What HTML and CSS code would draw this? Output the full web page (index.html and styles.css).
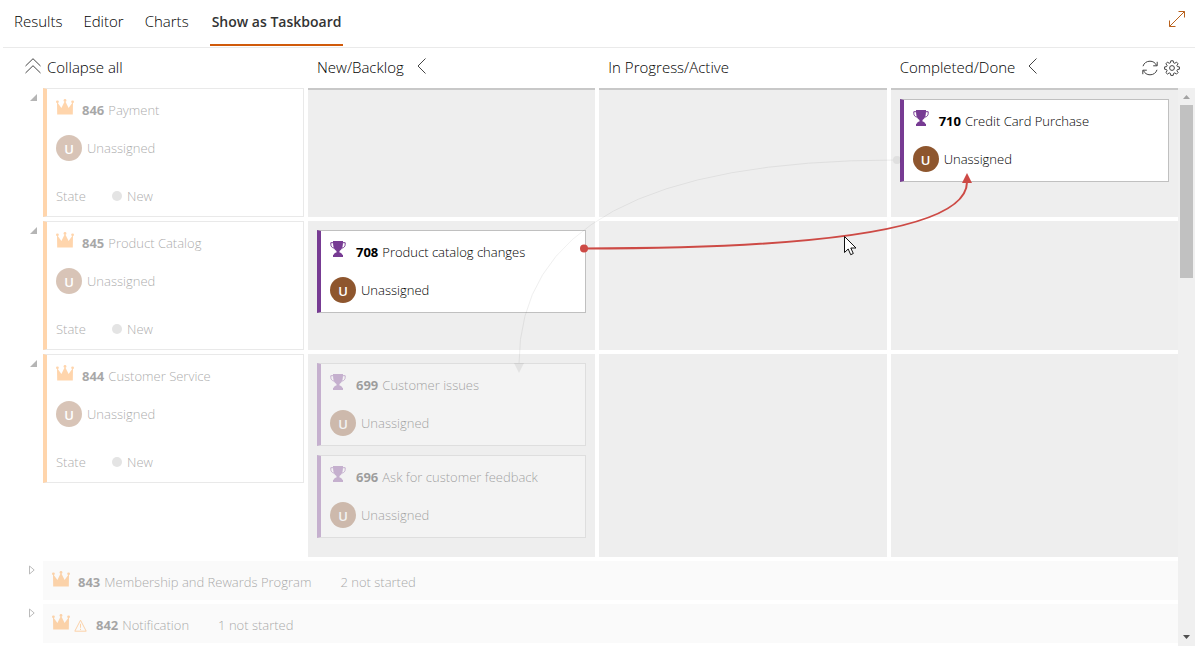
FILE: index.html
```html
<!DOCTYPE html>
<html lang="en">
<head>
    <meta charset="UTF-8">
    <meta name="viewport" content="width=device-width, initial-scale=1.0"/>
    <title>Show as Taskboard</title>
    <link rel="stylesheet" href="styles.css">
</head>
<body>
    <!--shared icons-->
    <svg class="icon-defs" aria-hidden="true">
      <symbol id="crown" viewBox="0 0 18 16">
        <path d="M1.200 15.500L1 4h.8l3.600 5L8.600 2.500h.8l3.200 6.500L16.200 4h.8l-.2 11.500z"/>
        <circle cx="1.400" cy="2.800" r="1.400"/><circle cx="9" cy="1.500" r="1.400"/><circle cx="16.600" cy="2.800" r="1.400"/>
      </symbol>
      <symbol id="trophy" viewBox="0 0 16 16">
        <path d="M3 0h10c0 5-.6 8.300-3.500 10v1.500c1.600.3 2.500 1 2.700 2.200h.8V16H3v-2.300h.8c.2-1.200 1.100-1.900 2.700-2.200V10C3.600 8.300 3 5 3 0z"/>
        <path class="handles" d="M3.500 1.700H.8v1.500c0 2.200 1.100 3.500 3.200 3.900M12.500 1.700h2.700v1.500c0 2.200-1.100 3.500-3.200 3.900"/>
      </symbol>
    </svg>

    <!--tabs-->
    <header class="topbar">
      <nav class="tabs">
        <a href="#results" class="tab">Results</a>
        <a href="#editor" class="tab">Editor</a>
        <a href="#charts" class="tab">Charts</a>
        <a href="#taskboard" class="tab active" aria-current="page">Show as Taskboard</a>
      </nav>
      <button type="button" class="icon-btn expand" aria-label="Full screen">
        <svg width="18" height="18" viewBox="0 0 18 18"><path d="M1.500 16.500l15-15M10.500 1.500h6v6M1.500 10.500v6h6"/></svg>
      </button>
    </header>

    <!--column headers-->
    <div class="columns">
      <button type="button" class="collapse-all">
        <svg width="16" height="16" viewBox="0 0 16 16"><path d="M.5 8L8 .7 15.500 8M.5 15L8 7.700l7.500 7.300"/></svg>
        Collapse all
      </button>
      <div class="column-head">New/Backlog
        <button type="button" class="icon-btn" aria-label="Collapse New/Backlog">
          <svg width="10" height="16" viewBox="0 0 10 16"><path d="M8.500.5L1 8l7.500 7.500"/></svg>
        </button>
      </div>
      <div class="column-head">In Progress/Active</div>
      <div class="column-head">Completed/Done
        <button type="button" class="icon-btn" aria-label="Collapse Completed/Done">
          <svg width="10" height="16" viewBox="0 0 10 16"><path d="M8.500.5L1 8l7.500 7.500"/></svg>
        </button>
      </div>
      <div class="tools">
        <button type="button" class="icon-btn" aria-label="Refresh">
          <svg width="16" height="16" viewBox="0 0 16 16"><path d="M1 6.200C2 3 4.600 1.200 8 1.200c3 0 5.300 1.500 6.600 4.300M15 9.800c-1 3.200-3.600 5-7 5-3 0-5.300-1.500-6.600-4.300M15.200 1.800v4h-4M.8 14.200v-4h4"/></svg>
        </button>
        <button type="button" class="icon-btn" aria-label="Settings">
          <svg width="16" height="16" viewBox="0 0 16 16"><path d="M6.800.8h2.400l.4 2 1.200.5 1.700-1.200 1.600 1.700-1.200 1.600.5 1.200 2 .3v2.300l-2 .4-.5 1.200 1.200 1.700-1.600 1.600-1.700-1.200-1.200.5-.4 2H6.800l-.4-2-1.200-.5-1.700 1.200-1.600-1.600 1.200-1.700-.5-1.200-2-.4V6.900l2-.3.5-1.200-1.200-1.600 1.600-1.700 1.700 1.200 1.200-.5z"/><circle cx="8" cy="8" r="2.400"/></svg>
        </button>
      </div>
    </div>

    <!--board-->
    <main class="board">
      <div class="lanes">
        <section class="lane first">
          <button type="button" class="toggle" aria-label="Collapse 846"><svg width="7" height="7" viewBox="0 0 7 7"><path d="M7 0v7H0z"/></svg></button>
          <article class="card epic faded">
            <h3 class="title"><svg class="icon"><use href="#crown"/></svg><b>846</b> Payment</h3>
            <p class="owner"><span class="avatar">U</span>Unassigned</p>
            <p class="state"><span class="state-label">State</span><i class="dot"></i>New</p>
          </article>
          <div class="cell"></div>
          <div class="cell"></div>
          <div class="cell">
            <article class="card">
              <h3 class="title"><svg class="icon"><use href="#trophy"/></svg><b>710</b> Credit Card Purchase</h3>
              <p class="owner"><span class="avatar">U</span>Unassigned</p>
            </article>
          </div>
        </section>

        <section class="lane">
          <button type="button" class="toggle" aria-label="Collapse 845"><svg width="7" height="7" viewBox="0 0 7 7"><path d="M7 0v7H0z"/></svg></button>
          <article class="card epic faded">
            <h3 class="title"><svg class="icon"><use href="#crown"/></svg><b>845</b> Product Catalog</h3>
            <p class="owner"><span class="avatar">U</span>Unassigned</p>
            <p class="state"><span class="state-label">State</span><i class="dot"></i>New</p>
          </article>
          <div class="cell">
            <article class="card">
              <h3 class="title"><svg class="icon"><use href="#trophy"/></svg><b>708</b> Product catalog changes</h3>
              <p class="owner"><span class="avatar">U</span>Unassigned</p>
            </article>
          </div>
          <div class="cell"></div>
          <div class="cell"></div>
        </section>

        <section class="lane">
          <button type="button" class="toggle" aria-label="Collapse 844"><svg width="7" height="7" viewBox="0 0 7 7"><path d="M7 0v7H0z"/></svg></button>
          <article class="card epic faded">
            <h3 class="title"><svg class="icon"><use href="#crown"/></svg><b>844</b> Customer Service</h3>
            <p class="owner"><span class="avatar">U</span>Unassigned</p>
            <p class="state"><span class="state-label">State</span><i class="dot"></i>New</p>
          </article>
          <div class="cell">
            <article class="card faded">
              <h3 class="title"><svg class="icon"><use href="#trophy"/></svg><b>699</b> Customer issues</h3>
              <p class="owner"><span class="avatar">U</span>Unassigned</p>
            </article>
            <article class="card faded">
              <h3 class="title"><svg class="icon"><use href="#trophy"/></svg><b>696</b> Ask for customer feedback</h3>
              <p class="owner"><span class="avatar">U</span>Unassigned</p>
            </article>
          </div>
          <div class="cell"></div>
          <div class="cell"></div>
        </section>

        <section class="lane closed">
          <button type="button" class="toggle" aria-label="Expand 843"><svg width="6" height="10" viewBox="0 0 6 10"><path class="hollow" d="M.5 1l4.700 4L.5 9z"/></svg></button>
          <div class="summary">
            <h3 class="title faded"><svg class="icon"><use href="#crown"/></svg><b>843</b> Membership and Rewards Program</h3>
            <span class="faded">2 not started</span>
          </div>
        </section>

        <section class="lane closed">
          <button type="button" class="toggle" aria-label="Expand 842"><svg width="6" height="10" viewBox="0 0 6 10"><path class="hollow" d="M.5 1l4.700 4L.5 9z"/></svg></button>
          <div class="summary">
            <h3 class="title faded"><svg class="icon"><use href="#crown"/></svg><svg class="warning" viewBox="0 0 13 13"><path d="M6.500 1.200l5.700 11H.8zM6.500 4.800v4M6.500 9.800v1.200"/></svg><b>842</b> Notification</h3>
            <span class="faded">1 not started</span>
          </div>
        </section>
      </div>

      <div class="scrollbar" aria-hidden="true">
        <svg width="17" height="17" viewBox="0 0 17 17"><path fill="#a3a3a3" d="M5 11l3.500-4 3.500 4z"/></svg>
        <div class="track"><div class="thumb"></div></div>
        <svg width="17" height="17" viewBox="0 0 17 17"><path fill="#505050" d="M5 6h7l-3.500 4z"/></svg>
      </div>

      <!--dependency links between cards-->
      <svg class="links" aria-hidden="true">
        <g class="link-muted">
          <path d="M894 72Q516 72 516 276"/>
          <circle cx="894" cy="72" r="4"/>
          <polygon points="511,275 521,275 516,285"/>
        </g>
        <g class="link">
          <path d="M581 160.500Q964 160.500 964 94"/>
          <circle cx="581" cy="160.500" r="4"/>
          <polygon points="959,95 969,95 964,85"/>
        </g>
        <path class="pointer" d="M841.500 148.500v16l3.700-3.500 2.500 5.700 2.600-1.200-2.500-5.500h5.200z"/>
      </svg>
    </main>
</body>
</html>
```
FILE: styles.css
```css
* {
  box-sizing: border-box;
}
body {
  display: flex;
  flex-direction: column;
  height: 100vh;
  margin: 0;
  padding: 0 3px;
  overflow: hidden;
  background: #fff;
  color: #000;
  font-family: "Open Sans", "Noto Sans", sans-serif;
  font-size: 13px;
  font-weight: 300;
  line-height: 20px;
}
h3, p {
  margin: 0;
  font-size: 13px;
  font-weight: 300;
}
button {
  padding: 0;
  border: 0;
  background: none;
  color: inherit;
  font: inherit;
  cursor: pointer;
}
svg {
  flex: none;
  display: block;
}
.icon-defs {
  position: absolute;
  width: 0;
  height: 0;
}
.faded {
  opacity: .34;
}

/* tabs */
.topbar {
  display: flex;
  justify-content: space-between;
  height: 48px;
  padding: 0 9px 0 11px;
  border-bottom: 1px solid #eaeaea;
}
.tabs {
  display: flex;
  gap: 21px;
}
.tab {
  height: 46px;
  padding-top: 11px;
  color: #000;
  font-size: 15px;
  text-decoration: none;
}
.tab.active {
  padding: 12px 2px 0;
  border-bottom: 2px solid #d05a0a;
  color: #333;
  font-size: 14px;
  font-weight: 600;
}
.icon-btn svg, .collapse-all svg {
  fill: none;
  stroke: #444;
}
.expand {
  align-self: flex-start;
  margin-top: 10px;
}
.expand svg {
  stroke: #b8611c;
}

/* column headers */
.columns, .lane {
  display: grid;
  grid-template-columns: 36px 261px repeat(3, 1fr);
  gap: 4px;
}
.columns {
  position: relative;
  height: 40px;
  padding: 0 17px 2px 0;
  font-size: 15px;
}
.collapse-all {
  grid-column: 1 / 3;
  display: flex;
  align-items: center;
  gap: 6px;
  padding-left: 22px;
}
.collapse-all svg {
  margin-bottom: 2px;
}
.column-head {
  display: flex;
  align-items: center;
  gap: 13px;
  padding-left: 9px;
}
.column-head svg {
  margin-bottom: 2px;
}
.tools {
  position: absolute;
  top: 12px;
  right: 15px;
  display: flex;
  gap: 6px;
}

/* board */
.board {
  position: relative;
  flex: 1;
  display: flex;
  min-height: 0;
}
.lanes {
  flex: 1;
  display: flex;
  flex-direction: column;
  gap: 4px;
  overflow: hidden;
}
.lane {
  flex: none;
  align-items: start;
}
.toggle {
  justify-self: end;
  margin: 6px 2px 0 0;
}
.toggle path {
  fill: #b5b5b5;
}
.toggle .hollow {
  fill: none;
  stroke: #bbb;
}
.cell {
  align-self: stretch;
  display: flex;
  flex-direction: column;
  gap: 9px;
  padding: 9px 9px 19px;
  background: #eee;
}
.first .cell {
  border-top: 2px solid #c8c8c8;
}
.card {
  height: 83px;
  padding: 9px 9px 0;
  border: 1px solid #c0c0c0;
  border-left: 4px solid #773b93;
  background: #fff;
}
.card.epic {
  height: 129px;
  border-left-color: #ff8610;
}
.title {
  display: flex;
  align-items: center;
  gap: 4px;
  height: 24px;
}
.title b {
  font-weight: 700;
}
.icon {
  width: 16px;
  height: 16px;
  margin: 0 6px 6px 0;
  fill: #773b93;
}
.epic .icon, .summary .icon {
  width: 18px;
  margin-right: 4px;
  fill: #ff8610;
}
.handles {
  fill: none;
  stroke: #773b93;
}
.owner {
  display: flex;
  align-items: center;
  gap: 5px;
  margin-top: 13px;
}
.avatar {
  width: 26px;
  height: 26px;
  border-radius: 50%;
  background: #8e562e;
  color: #fff;
  font-weight: 600;
  line-height: 28px;
  text-align: center;
}
.state {
  display: flex;
  align-items: center;
  margin-top: 25px;
}
.state-label {
  width: 56px;
}
.dot {
  width: 10px;
  height: 10px;
  margin-right: 5px;
  border-radius: 50%;
  background: #b2b2b2;
}

/* collapsed lanes */
.closed .toggle {
  margin: 4px 4px 0 0;
}
.summary {
  grid-column: 2 / -1;
  display: flex;
  gap: 29px;
  height: 39px;
  padding: 9px 9px 0;
  background: #fafafa;
}
.summary span {
  line-height: 24px;
}
.warning {
  width: 13px;
  height: 13px;
  margin: 0 5px 0 -4px;
  fill: none;
  stroke: #ff8610;
}

/* scrollbar */
.scrollbar {
  width: 17px;
  display: flex;
  flex-direction: column;
  background: #f0f0f0;
}
.track {
  flex: 1;
  padding: 0 2px;
}
.thumb {
  height: 33%;
  background: #c1c1c1;
}

/* links */
.links {
  position: absolute;
  inset: 0;
  width: 100%;
  height: 100%;
  pointer-events: none;
}
.links g path {
  fill: none;
}
.link {
  fill: #cd4a45;
  stroke: #cd4a45;
}
.link path {
  stroke-width: 2;
}
.link circle, .link polygon, .link-muted circle, .link-muted polygon {
  stroke: none;
}
.link-muted {
  fill: #000;
  stroke: #000;
  opacity: .06;
}
.pointer {
  fill: #fff;
  stroke: #111;
}
```
